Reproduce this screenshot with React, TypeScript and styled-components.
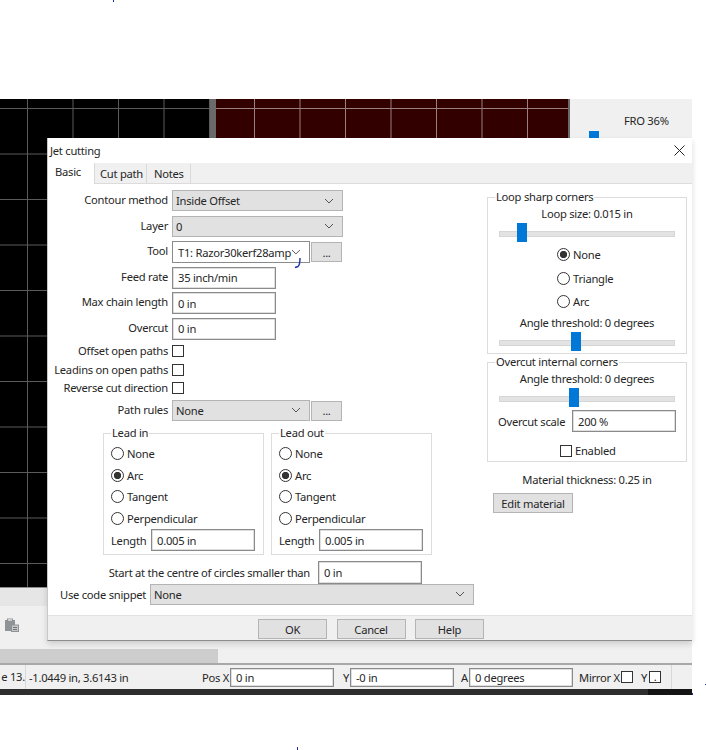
import styled, { createGlobalStyle } from 'styled-components';

const GlobalStyle = createGlobalStyle`
  html, body {
    margin: 0;
    padding: 0;
    background: #ffffff;
  }
  body {
    font-family: 'Noto Sans', 'Open Sans', sans-serif;
    font-size: 11.2px;
    letter-spacing: -0.26px;
    color: #262626;
  }
`;

const Chevron = () => (
    <svg width="10" height="6" viewBox="0 0 10 6" fill="none" stroke="#555" strokeWidth="1">
        <path d="M1 1l4 4 4-4" />
    </svg>
);

const CloseIcon = () => (
    <svg width="11" height="11" viewBox="0 0 11 11" fill="none" stroke="#222" strokeWidth="1">
        <path d="M.5.5l10 10M10.5.5l-10 10" />
    </svg>
);

const ClipboardIcon = () => (
    <svg width="15" height="15" viewBox="0 0 15 15">
        <path d="M1 3h2V1.5h6V3h2v5H7v6H1z" fill="#8f9396" />
        <rect x="4" y="2" width="4" height="2" fill="#c9cbcc" />
        <rect x="7.5" y="8" width="7" height="6.5" fill="#c4c6c8" stroke="#8f9396" strokeWidth="1" />
        <path d="M9 10.5h4M9 12.5h4" stroke="#777" strokeWidth="1" />
    </svg>
);

const Select = ({ value, width }: { value: string; width: number }) => (
    <SelectBox $width={width}>
        <span>{value}</span>
        <Chevron />
    </SelectBox>
);

const Radio = ({ label, checked }: { label: string; checked?: boolean }) => (
    <RadioRow>
        <RadioCircle $checked={checked} />
        {label}
    </RadioRow>
);

const Slider = ({ left }: { left: number }) => (
    <SliderTrack>
        <SliderThumb style={{ left }} />
    </SliderTrack>
);

const LeadBox = ({ title }: { title: string }) => (
    <Group $width={161} $height={122}>
        <Legend>{title}</Legend>
        <LeadRadios>
            <Radio label="None" />
            <Radio label="Arc" checked />
            <Radio label="Tangent" />
            <Radio label="Perpendicular" />
        </LeadRadios>
        <LengthRow>
            Length
            <Input $width={104}>0.005 in</Input>
        </LengthRow>
    </Group>
);

const App = () => (
    <Page>
        <GlobalStyle />
        <AppWindow>
            <CanvasArea>
                <GridPane $width={210} $color="#000000" $line="#5c5c5c" $offset={27} />
                <PaneDivider $width={6} />
                <GridPane $width={352} $color="#330000" $line="#9a8080" $offset={38} />
                <PaneDivider $width={2} />
                <SidePanel>
                    <FroLabel>FRO 36%</FroLabel>
                    <FroThumb />
                </SidePanel>
            </CanvasArea>
            <Toolbar>
                <ToolbarBand />
                <ToolbarIcons>
                    <ClipboardIcon />
                </ToolbarIcons>
            </Toolbar>
            <ScrollBar>
                <ScrollThumb />
            </ScrollBar>
            <StatusBar>
                <StatusClip>e 13.</StatusClip>
                <StatusCoords>-1.0449 in, 3.6143 in</StatusCoords>
                <StatusLabel $width={29}>Pos X</StatusLabel>
                <Input $width={104} $height={19}>0 in</Input>
                <StatusLabel $width={15}>Y</StatusLabel>
                <Input $width={104} $height={19}>-0 in</Input>
                <StatusLabel $width={14}>A</StatusLabel>
                <Input $width={104} $height={19}>0 degrees</Input>
                <MirrorLabel>Mirror X</MirrorLabel>
                <Checkbox />
                <MirrorY>Y</MirrorY>
                <Checkbox>.</Checkbox>
                <StatusEnd />
            </StatusBar>
            <DarkStrip>
                <DarkStripEnd />
            </DarkStrip>
        </AppWindow>

        <Dialog>
            <TitleBar>
                Jet cutting
                <CloseIcon />
            </TitleBar>
            <TabStrip>
                <Tab $active>Basic</Tab>
                <Tab $width={52}>Cut path</Tab>
                <Tab $width={44} $pad={7}>Notes</Tab>
            </TabStrip>
            <DialogBody>
                <LeftColumn>
                    <FormRow>
                        <FieldLabel>Contour method</FieldLabel>
                        <Select value="Inside Offset" width={171} />
                    </FormRow>
                    <FormRow>
                        <FieldLabel>Layer</FieldLabel>
                        <Select value="0" width={171} />
                    </FormRow>
                    <FormRow>
                        <FieldLabel>Tool</FieldLabel>
                        <ToolSelect>
                            <span>T1: Razor30kerf28amp</span>
                            <Chevron />
                        </ToolSelect>
                        <DotsButton>...</DotsButton>
                    </FormRow>
                    <FormRow>
                        <FieldLabel>Feed rate</FieldLabel>
                        <Input $width={104}>35 inch/min</Input>
                    </FormRow>
                    <FormRow>
                        <FieldLabel>Max chain length</FieldLabel>
                        <Input $width={104}>0 in</Input>
                    </FormRow>
                    <FormRow>
                        <FieldLabel>Overcut</FieldLabel>
                        <Input $width={104}>0 in</Input>
                    </FormRow>
                    <CheckList>
                        <CheckRow>
                            <FieldLabel>Offset open paths</FieldLabel>
                            <Checkbox />
                        </CheckRow>
                        <CheckRow>
                            <FieldLabel>Leadins on open paths</FieldLabel>
                            <Checkbox />
                        </CheckRow>
                        <CheckRow>
                            <FieldLabel>Reverse cut direction</FieldLabel>
                            <Checkbox />
                        </CheckRow>
                    </CheckList>
                    <PathRulesRow>
                        <FieldLabel>Path rules</FieldLabel>
                        <Select value="None" width={138} />
                        <DotsButton>...</DotsButton>
                    </PathRulesRow>
                    <LeadRow>
                        <LeadBox title="Lead in" />
                        <LeadBox title="Lead out" />
                    </LeadRow>
                    <StartRow>
                        Start at the centre of circles smaller than
                        <Input $width={104} $height={23}>0 in</Input>
                    </StartRow>
                    <SnippetRow>
                        <SnippetLabel>Use code snippet</SnippetLabel>
                        <Select value="None" width={324} />
                    </SnippetRow>
                </LeftColumn>

                <RightColumn>
                    <Group $width={200} $height={157}>
                        <Legend>Loop sharp corners</Legend>
                        <GroupCaption>Loop size: 0.015 in</GroupCaption>
                        <Slider left={17} />
                        <LoopRadios>
                            <Radio label="None" checked />
                            <Radio label="Triangle" />
                            <Radio label="Arc" />
                        </LoopRadios>
                        <GroupCaption>Angle threshold: 0 degrees</GroupCaption>
                        <Slider left={71} />
                    </Group>
                    <OvercutGroup $width={200} $height={100}>
                        <Legend>Overcut internal corners</Legend>
                        <GroupCaption>Angle threshold: 0 degrees</GroupCaption>
                        <Slider left={69} />
                        <ScaleRow>
                            Overcut scale
                            <Input $width={104}>200 %</Input>
                        </ScaleRow>
                        <EnabledRow>
                            <Checkbox />
                            Enabled
                        </EnabledRow>
                    </OvercutGroup>
                    <MaterialText>Material thickness: 0.25 in</MaterialText>
                    <EditButton>Edit material</EditButton>
                </RightColumn>
            </DialogBody>
            <Footer>
                <FooterButton>OK</FooterButton>
                <FooterButton>Cancel</FooterButton>
                <FooterButton>Help</FooterButton>
            </Footer>
        </Dialog>

        <Scribble width="10" height="12" viewBox="0 0 10 12" fill="none" stroke="#1a2fa8" strokeWidth="1.4">
            <path d="M6 1C6 5 6 8 4 9.5L1 10.5" />
        </Scribble>
        <Speck $left={113} $top={0} $height={2} />
        <Speck $left={297} $top={747} $height={3} />
        <Speck $left={705} $top={684} $height={1} />
        <Speck $left={692} $top={693} $height={2} />
    </Page>
);

export default App;

const Page = styled.div`
    position: relative;
    width: 706px;
    height: 750px;
    padding-top: 99px;
    box-sizing: border-box;
    overflow: hidden;
    background: #ffffff;
`;

const AppWindow = styled.div`
    width: 692px;
    display: flex;
    flex-direction: column;
`;

const CanvasArea = styled.div`
    display: flex;
    height: 488px;
`;

const GridPane = styled.div<{ $width: number; $color: string; $line: string; $offset: number }>`
    width: ${props => props.$width}px;
    background-color: ${props => props.$color};
    background-image:
        linear-gradient(to right, ${props => props.$line} 1px, transparent 1px),
        linear-gradient(to bottom, ${props => props.$line} 1px, transparent 1px);
    background-size: 45.5px 45.5px;
    background-position: ${props => props.$offset}px 9px;
`;

const PaneDivider = styled.div<{ $width: number }>`
    width: ${props => props.$width}px;
    background: #6a6a6a;
`;

const SidePanel = styled.div`
    position: relative;
    flex: 1;
    background: #f0f0f0;
`;

const FroLabel = styled.div`
    margin: 14px 0 0 54px;
    line-height: 15px;
`;

const FroThumb = styled.div`
    position: absolute;
    left: 19px;
    top: 32px;
    width: 10px;
    height: 8px;
    background: #0078d7;
`;

const Toolbar = styled.div`
    height: 62px;
    background: #f0f0f0;
    border-top: 1px solid #8c8c8c;
    box-sizing: border-box;
`;

const ToolbarBand = styled.div`
    height: 18px;
    background: #e6e6e6;
`;

const ToolbarIcons = styled.div`
    padding: 11px 0 0 4px;
`;

const ScrollBar = styled.div`
    height: 16px;
    background: #f0f0f0;
    border-bottom: 2px solid #a8a8a8;
    box-sizing: border-box;
`;

const ScrollThumb = styled.div`
    width: 218px;
    height: 14px;
    background: #cdcdcd;
`;

const StatusBar = styled.div`
    height: 24px;
    display: flex;
    align-items: center;
    background: #f0f0f0;
    white-space: nowrap;
`;

const StatusClip = styled.div`
    width: 25px;
    height: 100%;
    display: flex;
    justify-content: flex-end;
    line-height: 24px;
    border-right: 1px solid #d8d8d8;
`;

const StatusCoords = styled.div`
    width: 171px;
    padding-left: 3px;
`;

const StatusLabel = styled.div<{ $width: number }>`
    width: ${props => props.$width}px;
    margin-right: 1px;
    text-align: right;
`;

const MirrorLabel = styled.div`
    width: 41px;
    margin: 0 1px 0 6px;
`;

const MirrorY = styled.div`
    margin: 0 1px 0 8px;
    width: 7px;
`;

const StatusEnd = styled.div`
    height: 100%;
    margin-left: 10px;
    border-left: 1px solid #d8d8d8;
`;

const DarkStrip = styled.div`
    height: 6px;
    display: flex;
    justify-content: flex-end;
    background: #2e2e2e;
`;

const DarkStripEnd = styled.div`
    width: 44px;
    background: #141414;
`;

const Dialog = styled.div`
    position: absolute;
    left: 47px;
    top: 138px;
    width: 645px;
    height: 503px;
    display: flex;
    flex-direction: column;
    background: #ffffff;
    box-sizing: border-box;
    border-bottom: 1px solid #8c8c8c;
    border-left: 1px solid #c8c8c8;
    box-shadow: 0 3px 6px rgba(0, 0, 0, 0.15);
`;

const TitleBar = styled.div`
    height: 25px;
    flex: none;
    display: flex;
    align-items: center;
    justify-content: space-between;
    padding: 0 7px 0 2px;
`;

const TabStrip = styled.div`
    height: 21px;
    flex: none;
    display: flex;
    align-items: flex-end;
    background: #f0f0f0;
    border-bottom: 1px solid #dcdcdc;
    box-sizing: border-box;
`;

const Tab = styled.div<{ $active?: boolean; $width?: number; $pad?: number }>`
    width: ${props => props.$width || 47}px;
    height: ${props => (props.$active ? 21 : 19)}px;
    box-sizing: border-box;
    padding-left: ${props => props.$pad || (props.$active ? 7 : 5)}px;
    line-height: ${props => (props.$active ? 17 : 20)}px;
    background: ${props => (props.$active ? '#ffffff' : '#f0f0f0')};
    border-right: 1px solid #d9d9d9;
    margin-bottom: ${props => (props.$active ? -1 : 0)}px;
`;

const DialogBody = styled.div`
    flex: 1;
    display: flex;
    min-height: 0;
`;

const LeftColumn = styled.div`
    width: 439px;
    padding-top: 6px;
    display: flex;
    flex-direction: column;
`;

const FormRow = styled.div`
    height: 25.6px;
    flex: none;
    display: flex;
    align-items: flex-start;
`;

const FieldLabel = styled.div`
    width: 120px;
    margin-right: 4px;
    text-align: right;
    line-height: 20px;
    white-space: nowrap;
`;

const fieldBorder = '#8a8a8a';

const Input = styled.div<{ $width: number; $height?: number }>`
    width: ${props => props.$width}px;
    height: ${props => props.$height || 22}px;
    flex: none;
    box-sizing: border-box;
    padding-left: 5px;
    display: flex;
    align-items: center;
    background: #ffffff;
    border: 1px solid ${fieldBorder};
    box-shadow: inset 0 0 0 0.5px #c0c0c0;
`;

const SelectBox = styled.div<{ $width: number }>`
    width: ${props => props.$width}px;
    height: 21px;
    flex: none;
    box-sizing: border-box;
    padding: 0 8px 0 3px;
    display: flex;
    align-items: center;
    justify-content: space-between;
    white-space: nowrap;
    background: #e1e1e1;
    border: 1px solid #b4b4b4;
`;

const ToolSelect = styled(SelectBox).attrs({ $width: 138 })`
    height: 22px;
    background: #ffffff;
    border-color: ${fieldBorder};
    padding-left: 5px;
`;

const DotsButton = styled.div`
    width: 31px;
    height: 20px;
    margin: 1px 0 0 1px;
    box-sizing: border-box;
    display: flex;
    align-items: center;
    justify-content: center;
    background: #e1e1e1;
    border: 1px solid #b4b4b4;
`;

const CheckList = styled.div`
    margin: -2px 0 2px;
`;

const CheckRow = styled.div`
    height: 18.7px;
    display: flex;
    align-items: center;
`;

const Checkbox = styled.div`
    width: 12px;
    height: 12px;
    flex: none;
    box-sizing: border-box;
    display: flex;
    align-items: flex-end;
    justify-content: center;
    line-height: 10px;
    background: #ffffff;
    border: 1px solid #333333;
`;

const PathRulesRow = styled(FormRow)`
    height: 33px;
`;

const LeadRow = styled.div`
    display: flex;
    gap: 7px;
    padding-left: 55px;
`;

const Group = styled.div<{ $width: number; $height: number }>`
    position: relative;
    width: ${props => props.$width}px;
    height: ${props => props.$height}px;
    flex: none;
    box-sizing: border-box;
    border: 1px solid #dcdcdc;
`;

const Legend = styled.div`
    position: absolute;
    left: 7px;
    top: -8px;
    padding: 0 1px;
    line-height: 14px;
    background: #ffffff;
`;

const LeadRadios = styled.div`
    padding: 9px 0 0 7px;
`;

const RadioRow = styled.div`
    height: 21.6px;
    display: flex;
    align-items: center;
    gap: 3px;
`;

const RadioCircle = styled.span<{ $checked?: boolean }>`
    width: 13px;
    height: 13px;
    box-sizing: border-box;
    border: 1px solid #333333;
    border-radius: 50%;
    background: ${props => (props.$checked ? 'radial-gradient(circle, #333333 0 3.4px, #ffffff 3.9px)' : '#ffffff')};
`;

const LengthRow = styled.div`
    margin-left: 7px;
    display: flex;
    align-items: center;
    justify-content: space-between;
    width: 144px;
`;

const StartRow = styled.div`
    margin-top: 6px;
    height: 23px;
    flex: none;
    display: flex;
    align-items: center;
    justify-content: flex-end;
    gap: 8px;
    width: 374px;
`;

const SnippetRow = styled.div`
    height: 21px;
    flex: none;
    display: flex;
    align-items: center;
    gap: 5px;
    padding-left: 12px;
`;

const SnippetLabel = styled.div`
    width: 85px;
    white-space: nowrap;
`;

const RightColumn = styled.div`
    width: 200px;
    padding-top: 13px;
`;

const GroupCaption = styled.div`
    margin-top: 9px;
    line-height: 14px;
    text-align: center;
`;

const SliderTrack = styled.div`
    position: relative;
    height: 4px;
    margin: 10px 11px 8px;
    background: #e3e3e3;
    border: 1px solid #d6d6d6;
`;

const SliderThumb = styled.div`
    position: absolute;
    top: -9px;
    width: 10px;
    height: 19px;
    background: #0078d7;
`;

const LoopRadios = styled.div`
    margin: -2px 0 -7px 69px;
    height: 71px;
    & > div {
        height: 23.5px;
    }
`;

const OvercutGroup = styled(Group)`
    margin-top: 8px;
`;

const ScaleRow = styled.div`
    margin: 1px 0 0 10px;
    width: 178px;
    display: flex;
    align-items: center;
    justify-content: space-between;
`;

const EnabledRow = styled.div`
    margin: 11px 0 0 72px;
    display: flex;
    align-items: center;
    gap: 3px;
`;

const MaterialText = styled.div`
    margin-top: 10px;
    line-height: 16px;
    text-align: center;
`;

const EditButton = styled.div`
    width: 80px;
    height: 20px;
    margin: 5px 0 0 6px;
    box-sizing: border-box;
    display: flex;
    align-items: center;
    justify-content: center;
    background: #e1e1e1;
    border: 1px solid #b4b4b4;
`;

const Footer = styled.div`
    flex: none;
    height: 25px;
    box-sizing: border-box;
    display: flex;
    gap: 9.5px;
    padding: 3px 0 0 210px;
    background: #f0f0f0;
    border-top: 1px solid #e2e2e2;
`;

const FooterButton = styled.div`
    width: 69px;
    height: 20px;
    box-sizing: border-box;
    display: flex;
    align-items: center;
    justify-content: center;
    background: #e1e1e1;
    border: 1px solid #b4b4b4;
`;

const Scribble = styled.svg`
    position: absolute;
    left: 294px;
    top: 257px;
`;

const Speck = styled.div<{ $left: number; $top: number; $height: number }>`
    position: absolute;
    left: ${props => props.$left}px;
    top: ${props => props.$top}px;
    width: 1px;
    height: ${props => props.$height}px;
    background: #1a2fa8;
`;
